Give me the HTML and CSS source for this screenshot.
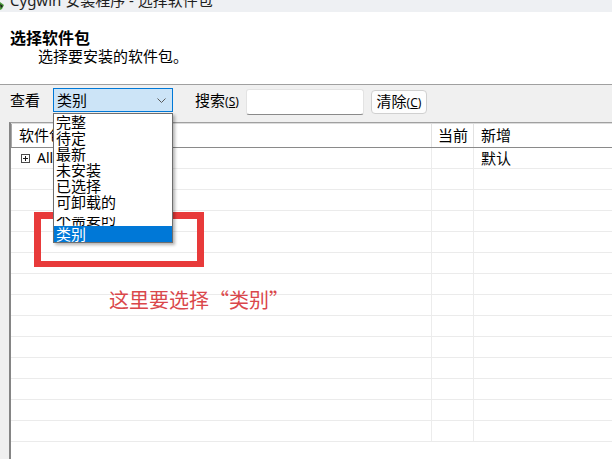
FILE: index.html
```html
<!DOCTYPE html>
<html lang="zh-CN">
  <head>
    <meta charset="UTF-8" />
    <title>Cygwin 安装程序 - 选择软件包</title>
    <link rel="stylesheet" href="styles.css">
  </head>

  <body>
    <!-- Window title (cut off at the top) -->
    <div class="titlebar">
      <svg class="app-icon" width="6" height="12" viewBox="0 0 6 12">
        <path d="M0 2 L4 5 L2 9 L0 10 Z" fill="#4a9a3c" />
        <path d="M0 4 L3 6 L1 8 Z" fill="#1c1c1c" />
      </svg>
      <span class="title-text">Cygwin 安装程序 - 选择软件包</span>
    </div>

    <!-- Wizard page header -->
    <div class="header">
      <div class="page-title">选择软件包</div>
      <div class="page-sub">选择要安装的软件包。</div>
    </div>

    <!-- View / search toolbar -->
    <div class="toolbar">
      <span class="tb-label">查看</span>
      <div class="combo">
        <span>类别</span>
        <svg class="chevron" width="9" height="5" viewBox="0 0 9 5">
          <path d="M0.5 0.5 L4.5 4.5 L8.5 0.5" fill="none" stroke="#5a5a5a" stroke-width="1" />
        </svg>
      </div>
      <span class="tb-label search-label">搜索<small>(<u>S</u>)</small></span>
      <div class="search-box"></div>
      <button class="btn">清除<small>(<u>C</u>)</small></button>
    </div>

    <!-- Package list -->
    <div class="list">
      <div class="row head">
        <div class="cell col-name">软件包</div>
        <div class="cell col-cur">当前</div>
        <div class="cell col-new">新增</div>
      </div>
      <div class="row">
        <div class="cell col-name">
          <svg class="expander" width="9" height="9" viewBox="0 0 9 9">
            <rect x="0.5" y="0.5" width="8" height="8" fill="#fff" stroke="#4a4a4a" />
            <path d="M2 4.5 H7 M4.5 2 V7" stroke="#1a1a1a" stroke-width="1" />
          </svg>
          <span class="latin">All</span>
        </div>
        <div class="cell col-cur"></div>
        <div class="cell col-new">默认</div>
      </div>
      <div class="row"><div class="cell col-name"></div><div class="cell col-cur"></div><div class="cell col-new"></div></div>
      <div class="row"><div class="cell col-name"></div><div class="cell col-cur"></div><div class="cell col-new"></div></div>
      <div class="row"><div class="cell col-name"></div><div class="cell col-cur"></div><div class="cell col-new"></div></div>
      <div class="row"><div class="cell col-name"></div><div class="cell col-cur"></div><div class="cell col-new"></div></div>
      <div class="row"><div class="cell col-name"></div><div class="cell col-cur"></div><div class="cell col-new"></div></div>
      <div class="row"><div class="cell col-name"></div><div class="cell col-cur"></div><div class="cell col-new"></div></div>
      <div class="row"><div class="cell col-name"></div><div class="cell col-cur"></div><div class="cell col-new"></div></div>
      <div class="row"><div class="cell col-name"></div><div class="cell col-cur"></div><div class="cell col-new"></div></div>
      <div class="row"><div class="cell col-name"></div><div class="cell col-cur"></div><div class="cell col-new"></div></div>
      <div class="row"><div class="cell col-name"></div><div class="cell col-cur"></div><div class="cell col-new"></div></div>
      <div class="row"><div class="cell col-name"></div><div class="cell col-cur"></div><div class="cell col-new"></div></div>
      <div class="row"><div class="cell col-name"></div><div class="cell col-cur"></div><div class="cell col-new"></div></div>
      <div class="row"><div class="cell col-name"></div><div class="cell col-cur"></div><div class="cell col-new"></div></div>
    </div>

    <!-- Annotation: red frame, drawn under the open list -->
    <div class="mark-box"></div>

    <!-- Open combo list -->
    <ul class="dropdown">
      <li>完整</li>
      <li>待定</li>
      <li>最新</li>
      <li>未安装</li>
      <li>已选择</li>
      <li>可卸载的</li>
      <li>不需要的</li>
      <li class="selected">类别</li>
    </ul>
    <div class="mark-gap"></div>

    <div class="mark-note">这里要选择“类别”</div>
  </body>
</html>
```

FILE: styles.css
```css
body {
  margin: 0;
  width: 612px;
  height: 459px;
  overflow: hidden;
  position: relative;
  display: flex;
  flex-direction: column;
  background-color: #f0f0f0;
  font-family: "Noto Sans", "Noto Sans CJK SC", sans-serif;
  font-size: 15px;
  color: #000;
}

.titlebar {
  flex: none;
  height: 12px;
  overflow: hidden;
  background-color: #eef0f3;
  display: flex;
  align-items: flex-start;
}

.app-icon {
  flex: none;
}

.title-text {
  margin-left: 4px;
  margin-top: -9px;
  line-height: 18px;
  font-size: 15px;
  color: #1f1f1f;
  white-space: nowrap;
}

.header {
  flex: none;
  height: 73px;
  box-sizing: border-box;
  padding: 16px 0 0 10px;
  background-color: #fff;
  border-bottom: 1px solid #a0a0a0;
}

.page-title {
  font-family: "Noto Sans CJK SC", sans-serif;
  font-weight: bold;
  font-size: 16px;
  line-height: 19px;
}

.page-sub {
  font-family: "Noto Sans CJK SC", sans-serif;
  margin-left: 28px;
  line-height: 18px;
  font-size: 15px;
}

.toolbar {
  flex: none;
  height: 37px;
  box-sizing: border-box;
  padding: 3px 0 0 10px;
  display: flex;
  align-items: flex-start;
}

.tb-label {
  line-height: 24px;
  margin-right: 13px;
}

.tb-label small,
.btn small {
  font-size: 12px;
}

.combo {
  width: 120px;
  height: 24px;
  box-sizing: border-box;
  border: 1px solid #0078d7;
  background-color: #cce4f7;
  padding-left: 3px;
  line-height: 22px;
  display: flex;
  align-items: center;
  justify-content: space-between;
}

.chevron {
  margin-right: 6px;
}

.search-label {
  margin-left: 22px;
  margin-right: 0;
  width: 51px;
}

.search-box {
  width: 118px;
  height: 26px;
  margin-top: 1px;
  box-sizing: border-box;
  background-color: #fff;
  border: 1px solid #e3e3e3;
  border-bottom-color: #8a8a8a;
  border-radius: 3px;
}

.btn {
  width: 56px;
  height: 24px;
  margin: 2px 0 0 7px;
  padding: 0;
  box-sizing: border-box;
  background-color: #fdfdfd;
  border: 1px solid #d0d0d0;
  border-radius: 4px;
  font-family: inherit;
  font-size: 15px;
  line-height: 20px;
  color: #000;
}

.list {
  flex: 1;
  min-height: 0;
  overflow: hidden;
  margin-left: 9px;
  border-left: 2px solid #858585;
  border-top: 1px solid #a0a0a0;
  background-color: #fff;
}

.row {
  display: flex;
  height: 21px;
  box-sizing: border-box;
  border-bottom: 1px solid #ebebeb;
  line-height: 20px;
}

.row.head {
  height: 25px;
  border-top: 1px solid #dcdcdc;
  border-bottom: 1px solid #8a8a8a;
  line-height: 23px;
}

.cell {
  box-sizing: border-box;
  white-space: nowrap;
  overflow: hidden;
}

.col-name {
  width: 421px;
  padding-left: 10px;
  border-right: 1px solid #ececec;
  display: flex;
  align-items: center;
}

.head .col-name {
  padding-left: 7px;
  border-left: 1px solid #a8a8a8;
  display: block;
}

.col-cur {
  width: 42px;
  padding-left: 6px;
  border-right: 1px solid #ececec;
}

.col-new {
  flex: 1;
  padding-left: 7px;
}

.head .col-cur,
.head .col-name {
  border-right-color: #e2e2e2;
}

.expander {
  margin-right: 7px;
}

.latin {
  font-size: 14px;
}

.dropdown {
  position: absolute;
  left: 53px;
  top: 113px;
  width: 120px;
  box-sizing: border-box;
  margin: 0;
  padding: 0;
  list-style: none;
  background-color: #fff;
  border: 1px solid #6e6e6e;
  box-shadow: 2px 2px 3px rgba(0, 0, 0, 0.3);
}

.dropdown li {
  height: 16px;
  line-height: 16px;
  padding-left: 2px;
  white-space: nowrap;
}

.dropdown .selected {
  background-color: #0078d7;
  color: #fff;
}

.mark-box {
  position: absolute;
  left: 34px;
  top: 212px;
  width: 170px;
  height: 55px;
  box-sizing: border-box;
  border: 7px solid #e83a3a;
  border-bottom-width: 6px;
}

.mark-gap {
  position: absolute;
  left: 54px;
  top: 211px;
  width: 118px;
  height: 6px;
  background-color: #fff;
}

.mark-note {
  position: absolute;
  left: 109px;
  top: 288px;
  font-family: "Noto Sans CJK SC", sans-serif;
  font-size: 20px;
  line-height: 24px;
  color: #da474b;
  white-space: nowrap;
}
```
